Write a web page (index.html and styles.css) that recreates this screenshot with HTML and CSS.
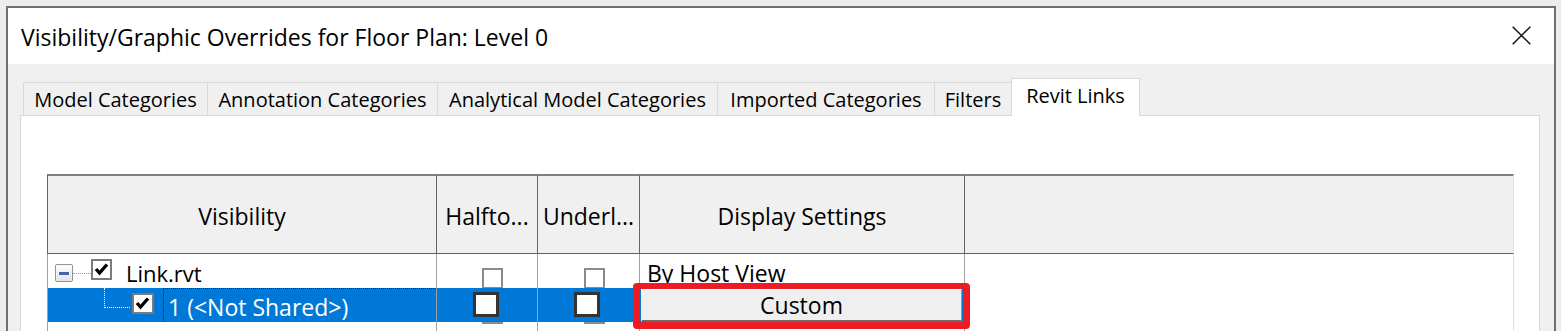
FILE: index.html
```html
<!DOCTYPE html>
<html>
<head>
<meta charset="utf-8">
<link rel="stylesheet" href="styles.css">
</head>
<body>
<div class="dialog">
  <div class="titlebar">
    <span class="title">Visibility/Graphic Overrides for Floor Plan: Level 0</span>
    <svg class="close" width="19" height="19" viewBox="0 0 19 19"><path d="M0.7 0.7 L18.3 18.3 M18.3 0.7 L0.7 18.3" stroke="#111" stroke-width="1.5" fill="none"/></svg>
  </div>
  <div class="body">
    <div class="tabs">
      <div class="tabline lead"></div>
      <div class="tab t1">Model Categories</div>
      <div class="tab t2">Annotation Categories</div>
      <div class="tab t3">Analytical Model Categories</div>
      <div class="tab t4">Imported Categories</div>
      <div class="tab t5">Filters</div>
      <div class="tab active t6">Revit Links</div>
      <div class="tabline fill"></div>
    </div>
    <div class="panel">
      <div class="grid">
        <div class="hc first">Visibility</div>
        <div class="hc">Halfto...</div>
        <div class="hc">Underl...</div>
        <div class="hc">Display Settings</div>
        <div class="hc last"></div>

        <div class="c first tree1">
          <div class="expander"><div class="minus"></div></div>
          <div class="dots"></div>
          <div class="cb"><svg viewBox="0 0 17 17"><polyline points="3,8 6.5,12 14,3.5" fill="none" stroke="#000" stroke-width="3.4"/></svg></div>
          <span class="label">Link.rvt</span>
        </div>
        <div class="c chk1"><div class="cbe"></div></div>
        <div class="c chk1 u"><div class="cbe"></div></div>
        <div class="c txt">By Host View</div>
        <div class="c last"></div>

        <div class="c first sel tree2">
          <div class="elbow"></div>
          <div class="cb cb2"><svg viewBox="0 0 17 17"><polyline points="3,8 6.5,12 14,3.5" fill="none" stroke="#000" stroke-width="3.4"/></svg></div>
          <div class="focus">1 (&lt;Not Shared&gt;)</div>
        </div>
        <div class="c sel chk2"><div class="cbd"></div></div>
        <div class="c sel chk2"><div class="cbd"></div></div>
        <div class="c sel btncell">
          <div class="btn">Custom</div>
          <div class="callout"></div>
        </div>
        <div class="c last"></div>

        <div class="c first"></div>
        <div class="c chk3"><div class="cbtop"></div></div>
        <div class="c chk3 u"><div class="cbtop"></div></div>
        <div class="c"></div>
        <div class="c last"></div>
      </div>
    </div>
  </div>
</div>
</body>
</html>
```
FILE: styles.css
```css
html, body {
  margin: 0;
  height: 331px;
  overflow: hidden;
  background: #ededed;
  font-family: "Open Sans", "Noto Sans", sans-serif;
  color: #000;
}

.dialog {
  margin: 6px 5px 0 6px;
  border: 2px solid #707070;
  border-bottom: 0;
  height: 420px;
  background: #f0f0f0;
}

.titlebar {
  height: 56px;
  background: #fff;
  display: flex;
  align-items: center;
  justify-content: space-between;
  padding: 0 23px 0 13px;
}

.title {
  font-size: 23px;
  padding-top: 2px;
}

.close {
  display: block;
  margin-top: -2px;
}

.body {
  padding: 14px 14px 0 12px;
}

.tabs {
  display: flex;
  align-items: flex-end;
  height: 38px;
}

.tabline {
  height: 1px;
  background: #d9d9d9;
}

.tabline.lead { width: 3px; }
.tabline.fill { flex: 1; }

.tab {
  box-sizing: border-box;
  height: 34px;
  border: 1px solid #d9d9d9;
  border-right: 0;
  display: flex;
  align-items: center;
  justify-content: center;
  font-size: 20px;
  padding-top: 1px;
  white-space: nowrap;
}

.t1 { width: 184px; }
.t2 { width: 230px; }
.t3 { width: 280px; }
.t4 { width: 217px; }
.t5 { width: 77px; }
.t6 { width: 129px; }

.tab.active {
  height: 38px;
  background: #fff;
  border: 1px solid #d9d9d9;
  border-bottom: 0;
  padding-top: 0;
  padding-bottom: 5px;
}

.panel {
  background: #fff;
  border: 1px solid #d9d9d9;
  border-top: 0;
  padding: 58px 0 0 26px;
  height: 300px;
}

.grid {
  display: grid;
  grid-template-columns: 390px 101px 102px 325px 549px;
  grid-template-rows: 80px 34px 34px 30px;
  font-size: 23px;
}

.hc {
  box-sizing: border-box;
  background: #f0f0f0;
  border-top: 2px solid #7f7f7f;
  border-bottom: 1px solid #646464;
  border-right: 1px solid #646464;
  display: flex;
  align-items: center;
  justify-content: center;
  padding-top: 3px;
  white-space: nowrap;
  overflow: hidden;
}

.hc.first { border-left: 1px solid #646464; }
.hc.last { border-right: 1px solid #e2e2e2; }

.c {
  box-sizing: border-box;
  border-right: 1px solid #a0a0a0;
  overflow: hidden;
  white-space: nowrap;
}

.c.first { border-left: 1px solid #a0a0a0; }
.c.last { border-right: 1px solid #dedede; }

.sel {
  background: #0078d7;
  color: #fff;
}

/* tree row 1 */
.tree1 {
  display: flex;
  align-items: flex-start;
  padding-left: 7px;
}

.expander {
  box-sizing: border-box;
  width: 18px;
  height: 18px;
  margin-top: 10px;
  border: 1px solid #939393;
  border-radius: 2px;
  background: linear-gradient(#fefefe, #e4e4e4);
  display: flex;
  align-items: center;
  justify-content: center;
}

.minus {
  width: 10px;
  height: 3px;
  background: #4762ae;
}

.dots {
  width: 18px;
  margin-top: 19px;
  border-top: 1px dotted #9a9a9a;
}

.cb {
  box-sizing: border-box;
  width: 21px;
  height: 21px;
  margin-top: 5px;
  border: 2px solid #7b7b7b;
  background: #fff;
}

.cb svg {
  display: block;
  width: 17px;
  height: 17px;
}

.label {
  margin-left: 14px;
  padding-top: 2px;
  line-height: 34px;
  font-size: 22px;
}

/* tree row 2 */
.tree2 {
  display: flex;
  align-items: flex-start;
  padding-left: 56px;
}

.elbow {
  box-sizing: border-box;
  width: 26px;
  height: 20px;
  border-left: 1px dotted #fff;
  border-bottom: 1px dotted #fff;
}

.cb2 {
  width: 22px;
  margin-left: 2px;
}

.focus {
  flex: 1;
  margin-left: 9px;
  height: 34px;
  box-sizing: border-box;
  border-left: 1px dotted #1a2a40;
  border-top: 1px dotted #1a2a40;
  padding-left: 4px;
  padding-top: 1px;
  line-height: 34px;
}

/* checkboxes */
.chk1 { padding: 14px 0 0 45px; }
.chk1.u { padding-left: 46px; }

.cbe {
  box-sizing: border-box;
  width: 21px;
  height: 21px;
  border: 2px solid #8b8b8b;
  background: #fff;
}

.chk2 { padding: 4px 0 0 36px; }

.cbd {
  box-sizing: border-box;
  width: 26px;
  height: 25px;
  border: 3px solid #333;
  background: #fff;
}

.chk3 { padding-left: 45px; }
.chk3.u { padding-left: 46px; }

.cbtop {
  width: 21px;
  height: 2px;
  background: #8b8b8b;
}

.txt {
  padding-left: 7px;
  padding-top: 2px;
  line-height: 34px;
}

/* button */
.btncell {
  position: relative;
  overflow: visible;
  padding: 1px 2px 0 1px;
}

.btn {
  box-sizing: border-box;
  height: 33px;
  background: #efefef;
  color: #000;
  border-top: 1px solid #fff;
  border-left: 1px solid #fff;
  border-right: 1px solid #9a9a9a;
  border-bottom: 2px solid #6a6a6a;
  display: flex;
  align-items: center;
  justify-content: center;
}

.callout {
  position: absolute;
  left: -7px;
  top: -5px;
  width: 337px;
  height: 46px;
  box-sizing: border-box;
  border: 7px solid #ed1c24;
  border-top-width: 6px;
  border-radius: 4px;
}
```
